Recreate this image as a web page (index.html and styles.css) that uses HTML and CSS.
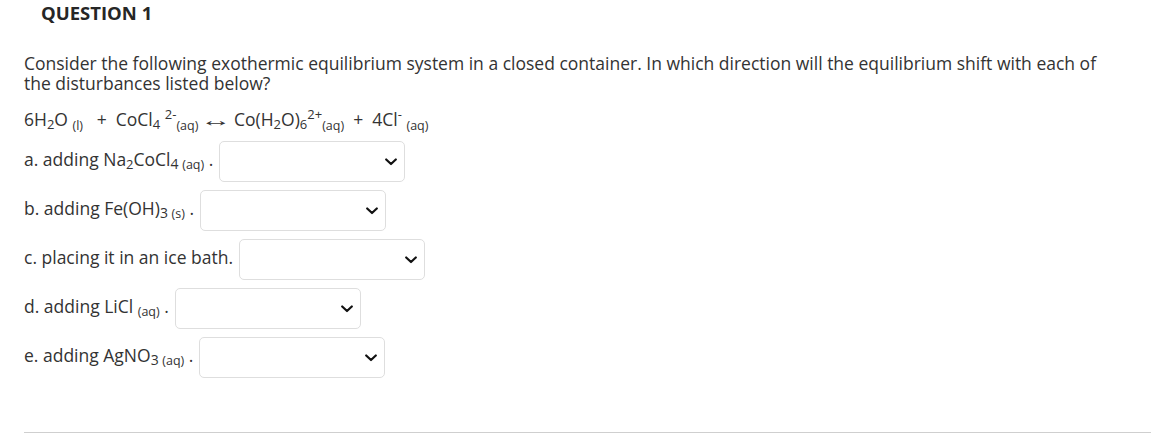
FILE: index.html
```html
<!DOCTYPE html>
<html lang="en">
<head>
<meta charset="utf-8">
<title>Question 1</title>
<link rel="stylesheet" href="styles.css">
</head>
<body>
<div class="page">
  <h2 class="heading">QUESTION 1</h2>
  <p class="prompt">Consider the following exothermic equilibrium system in a closed container. In which direction will the equilibrium shift with each of the disturbances listed below?</p>
  <p class="equation">6H<sub class="s">2</sub>O <sub class="ph">(l)</sub>&nbsp;&nbsp; +&nbsp; CoCl<sub class="s">4</sub> <sup class="ch">2-</sup><sub class="ph">(aq)</sub> <span class="arrow">&#8596;</span> Co(H<sub class="s">2</sub>O)<sub class="s">6</sub><sup class="ch">2+</sup><sub class="ph">(aq)</sub> &nbsp;+&nbsp; 4Cl<sup class="ch">-</sup> <sub class="ph">(aq)</sub></p>
  <div class="rows">
    <div class="row">
      <span class="label">a. adding Na<sub class="s">2</sub>CoCl<sub class="s3">4 <span class="ph2">(aq)</span></sub> .</span>
      <div class="dropdown"><svg class="chev" width="12" height="8" viewBox="0 0 12 8"><path d="M1.2 1.5 L6 6 L10.8 1.5" fill="none" stroke="#111" stroke-width="2.2" stroke-linecap="round" stroke-linejoin="round"/></svg></div>
    </div>
    <div class="row">
      <span class="label">b. adding Fe(OH)<sub class="s3">3 <span class="ph2">(s)</span></sub> .</span>
      <div class="dropdown"><svg class="chev" width="12" height="8" viewBox="0 0 12 8"><path d="M1.2 1.5 L6 6 L10.8 1.5" fill="none" stroke="#111" stroke-width="2.2" stroke-linecap="round" stroke-linejoin="round"/></svg></div>
    </div>
    <div class="row">
      <span class="label">c. placing it in an ice bath.</span>
      <div class="dropdown"><svg class="chev" width="12" height="8" viewBox="0 0 12 8"><path d="M1.2 1.5 L6 6 L10.8 1.5" fill="none" stroke="#111" stroke-width="2.2" stroke-linecap="round" stroke-linejoin="round"/></svg></div>
    </div>
    <div class="row">
      <span class="label">d. adding LiCl <sub class="ph2">(aq)</sub> .</span>
      <div class="dropdown"><svg class="chev" width="12" height="8" viewBox="0 0 12 8"><path d="M1.2 1.5 L6 6 L10.8 1.5" fill="none" stroke="#111" stroke-width="2.2" stroke-linecap="round" stroke-linejoin="round"/></svg></div>
    </div>
    <div class="row">
      <span class="label">e. adding AgNO<sub class="s3">3 <span class="ph2">(aq)</span></sub> .</span>
      <div class="dropdown"><svg class="chev" width="12" height="8" viewBox="0 0 12 8"><path d="M1.2 1.5 L6 6 L10.8 1.5" fill="none" stroke="#111" stroke-width="2.2" stroke-linecap="round" stroke-linejoin="round"/></svg></div>
    </div>
  </div>
  <div class="rule"></div>
</div>
</body>
</html>
```
FILE: styles.css
```css
html, body {
  margin: 0;
  padding: 0;
  background: #fff;
}
body {
  font-family: "Open Sans", "Liberation Sans", sans-serif;
  color: #333;
}
.page {
  padding-left: 24px;
}
.heading {
  margin: 0;
  padding-left: 17px;
  font-size: 18.5px;
  line-height: 26px;
  font-weight: 700;
  color: #262626;
}
.prompt {
  margin: 27px 40px 0 0;
  font-size: 17.5px;
  line-height: 20px;
}
.equation {
  margin: 16px 0 0 0;
  height: 20px;
  font-size: 17.5px;
  line-height: 20px;
  white-space: nowrap;
}
.arrow {
  display: inline-block;
  font-family: "Liberation Sans", sans-serif;
  font-size: 17.5px;
  line-height: 10px;
  margin: 0 5px 0 4px;
  transform: scaleX(1.8);
}
sub, sup {
  line-height: 0;
}
.s {
  font-size: 13px;
  vertical-align: -3px;
}
.s3 {
  font-size: 14px;
  vertical-align: -3px;
}
.ph {
  font-size: 12.5px;
  vertical-align: -4px;
}
.ph2 {
  font-size: 12.5px;
}
sub.ph2 {
  vertical-align: -3px;
}
.ch {
  font-size: 13px;
  vertical-align: 7px;
}
.rows {
  margin-top: 12px;
  display: flex;
  flex-direction: column;
  gap: 8px;
}
.row {
  display: flex;
  align-items: flex-start;
  gap: 6px;
}
.label {
  font-size: 17.5px;
  line-height: 20px;
  margin-top: 8px;
  white-space: nowrap;
}
.dropdown {
  box-sizing: border-box;
  width: 186px;
  height: 41px;
  border: 1px solid #dedede;
  border-radius: 5px;
  display: flex;
  align-items: center;
  justify-content: flex-end;
  padding-right: 7px;
  background: #fff;
}
.chev {
  display: block;
}
.rule {
  margin-top: 54px;
  height: 1px;
  background: #cfcfcf;
}
```
